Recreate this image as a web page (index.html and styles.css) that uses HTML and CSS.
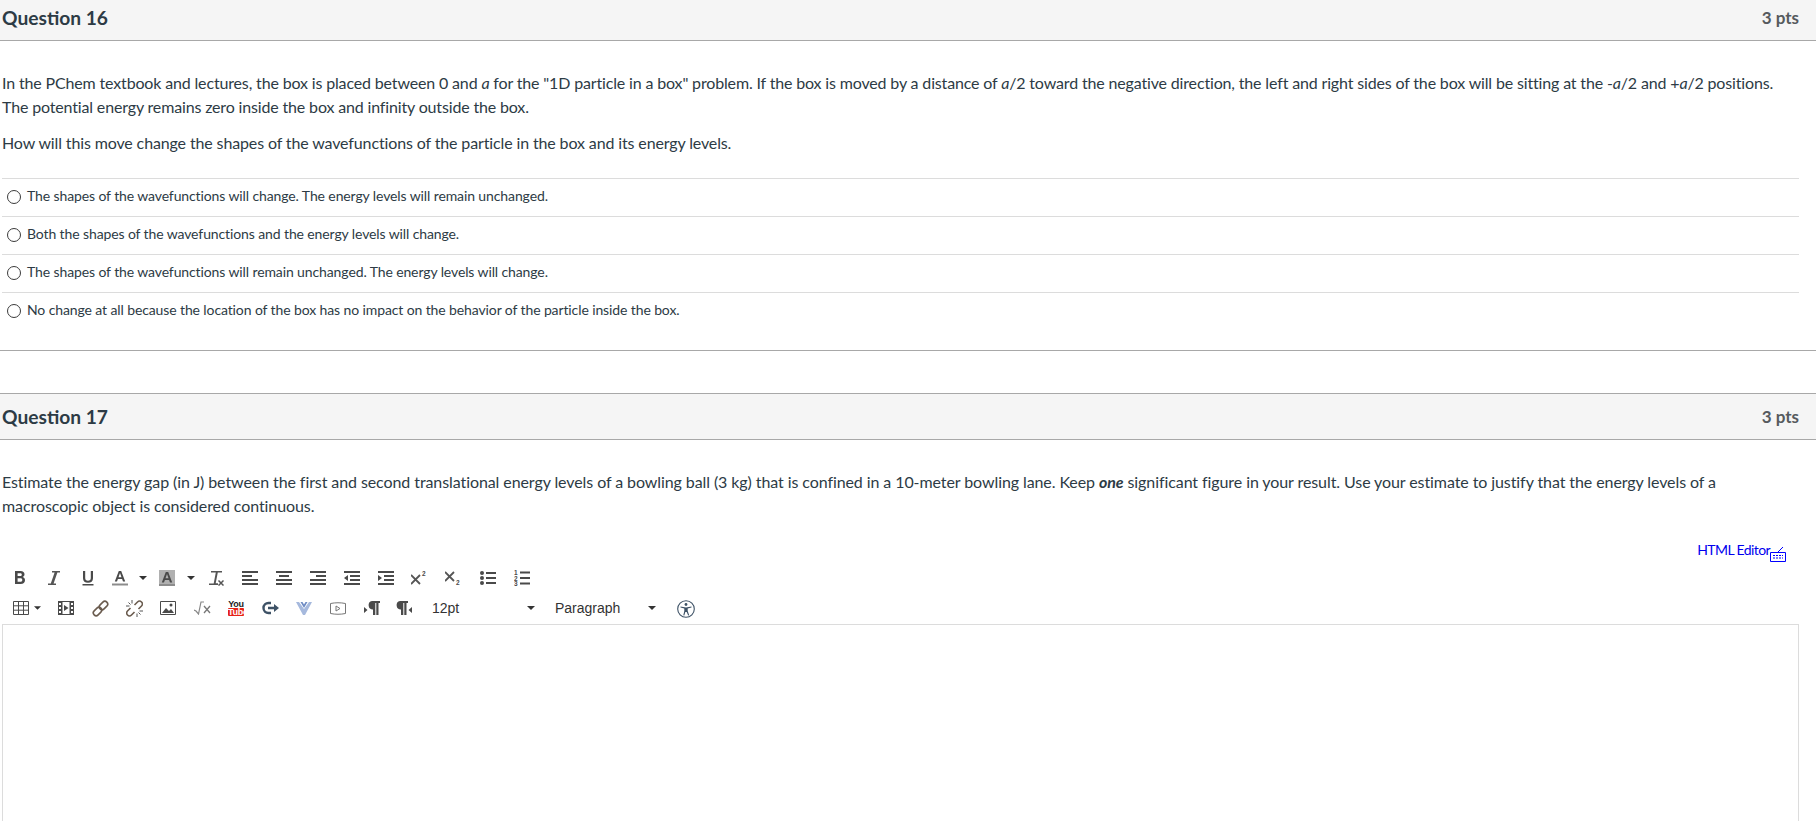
FILE: index.html
```html
<!DOCTYPE html>
<html lang="en">
<head>
<meta charset="utf-8">
<title>Quiz</title>
<link rel="stylesheet" href="styles.css">
</head>
<body>
<svg class="defs" width="0" height="0" aria-hidden="true"><defs>
<g id="caret"><path d="M0 0h8L4 4z" fill="#333"/></g>
</defs></svg>
<main class="page">
<section class="question q16">
  <header class="q-head"><h2 class="q-title">Question 16</h2><span class="q-pts">3 pts</span></header>
  <div class="q-body">
    <p class="q-text q-lead">In the PChem textbook and lectures, the box is placed between 0 and <em>a</em> for the "1D particle in a box" problem. If the box is moved by a distance of <em>a</em>/2 toward the negative direction, the left and right sides of the box will be sitting at the -<em>a</em>/2 and +<em>a</em>/2 positions. The potential energy remains zero inside the box and infinity outside the box.</p>
    <p class="q-text q-gap">How will this move change the shapes of the wavefunctions of the particle in the box and its energy levels.</p>
    <ul class="answers">
      <li class="answer"><span class="radio"></span>The shapes of the wavefunctions will change. The energy levels will remain unchanged.</li>
      <li class="answer"><span class="radio"></span>Both the shapes of the wavefunctions and the energy levels will change.</li>
      <li class="answer"><span class="radio"></span>The shapes of the wavefunctions will remain unchanged. The energy levels will change.</li>
      <li class="answer"><span class="radio"></span>No change at all because the location of the box has no impact on the behavior of the particle inside the box.</li>
    </ul>
  </div>
</section>
<section class="question q17">
  <header class="q-head"><h2 class="q-title">Question 17</h2><span class="q-pts">3 pts</span></header>
  <div class="q-body">
    <p class="q-text q-wide">Estimate the energy gap (in J) between the first and second translational energy levels of a bowling ball (3 kg) that is confined in a 10-meter bowling lane. Keep <strong><em>one</em></strong> significant figure in your result. Use your estimate to justify that the energy levels of a macroscopic object is considered continuous.</p>
    <div class="editor-link-row"><a class="html-link">HTML Editor<svg class="kbd" width="18" height="16" viewBox="0 0 18 16"><path d="M1.500 6.500h15v9h-15z" fill="none" stroke="#00f"/><path d="M9 6l5-5" stroke="#00f" fill="none"/><path d="M4 9h2v1H4zM7 9h2v1H7zM10 9h2v1h-2zM13 9h1v1h-1zM4 11.500h2v1H4zM7 11.500h2v1H7zM10 11.500h2v1h-2zM13 11.500h1v1h-1z" fill="#00f"/></svg></a></div>
    <div class="toolbar">
      <div class="tb-row">
        <span class="btn w34"><svg width="16" height="16" viewBox="0 0 16 16"><path fill="#4a4a4a" d="M3 1h5.500c2.600 0 4 1.300 4 3.300 0 1.300-.7 2.300-1.800 2.800 1.500.4 2.300 1.600 2.300 3.100 0 2.300-1.600 3.800-4.300 3.800H3zm2.600 2.200v2.900h2.500c1 0 1.700-.5 1.700-1.500s-.7-1.400-1.700-1.400zm0 5v3.600h2.800c1.200 0 1.900-.6 1.900-1.800s-.7-1.800-1.900-1.800z"/></svg></span>
        <span class="btn w34"><svg width="16" height="16" viewBox="0 0 16 16"><path fill="#555" d="M6 1h8v1.500h-2.600L7.600 13.500H10V15H2v-1.500h2.800L8.600 2.500H6z"/></svg></span>
        <span class="btn w34"><svg width="16" height="16" viewBox="0 0 16 16"><path fill="#4a4a4a" d="M3 1h2.200v7c0 1.800 1 2.700 2.800 2.700s2.800-.9 2.800-2.700V1H13v7.200c0 3-2 4.600-5 4.600s-5-1.600-5-4.600zM2.500 14h11v1.500h-11z"/></svg></span>
        <span class="btn w30"><svg width="16" height="16" viewBox="0 0 16 16"><path fill="#4a4a4a" d="M6.800 1h2.400l4 10.500h-2.200l-.9-2.500H5.900L5 11.500H2.800zM6.500 7.200h3L8 3z"/><path fill="#8c8c8c" d="M0 13.500h16V15.500H0z"/></svg></span>
        <span class="caret-btn w16"><svg width="8" height="4"><use href="#caret"/></svg></span>
        <span class="btn w32"><svg width="16" height="17" viewBox="0 0 16 17"><path fill="#b0b0b0" d="M0 0h16v14H0z"/><path fill="#4a4a4a" d="M6.800 2h2.400l4 10.500h-2.200l-.9-2.500H5.900L5 12.500H2.800zM6.500 8.200h3L8 4z"/><path fill="#8c8c8c" d="M0 14h16v2H0z"/></svg></span>
        <span class="caret-btn w16"><svg width="8" height="4"><use href="#caret"/></svg></span>
        <span class="btn w34"><svg width="16" height="16" viewBox="0 0 16 16"><path fill="#555" d="M3 1h11v1.500H9.800L7.700 13.300H10V15H1v-1.500h4.700L7.800 2.500H3z"/><path stroke="#555" stroke-width="1.500" d="M10.500 10.500l5 5m0-5l-5 5"/></svg></span>
        <span class="btn w34"><svg width="16" height="16" viewBox="0 0 16 16"><path fill="#4a4a4a" d="M0 1h16v2H0zM0 5h10v2H0zM0 9h16v2H0zM0 13h16v2H0z"/></svg></span>
        <span class="btn w34"><svg width="16" height="16" viewBox="0 0 16 16"><path fill="#4a4a4a" d="M0 1h16v2H0zM3 5h10v2H3zM0 9h16v2H0zM0 13h16v2H0z"/></svg></span>
        <span class="btn w34"><svg width="16" height="16" viewBox="0 0 16 16"><path fill="#4a4a4a" d="M0 1h16v2H0zM6 5h10v2H6zM0 9h16v2H0zM0 13h16v2H0z"/></svg></span>
        <span class="btn w34"><svg width="16" height="16" viewBox="0 0 16 16"><path fill="#4a4a4a" d="M0 1h16v2H0zM6 5h10v2H6zM6 9h10v2H6zM0 13h16v2H0zM4 5v6L0 8z"/></svg></span>
        <span class="btn w34"><svg width="16" height="16" viewBox="0 0 16 16"><path fill="#4a4a4a" d="M0 1h16v2H0zM6 5h10v2H6zM6 9h10v2H6zM0 13h16v2H0zM0 5v6l4-3z"/></svg></span>
        <span class="btn w32"><svg width="16" height="16" viewBox="0 0 16 16"><path stroke="#555" stroke-width="1.800" d="M0 5l9 9m0-9l-9 9"/><text x="11" y="6" class="mini">2</text></svg></span>
        <span class="btn w35"><svg width="16" height="16" viewBox="0 0 16 16"><path stroke="#555" stroke-width="1.800" d="M0 2l9 9m0-9l-9 9"/><text x="11" y="15" class="mini">2</text></svg></span>
        <span class="btn w35"><svg width="16" height="16" viewBox="0 0 16 16"><path fill="#4a4a4a" d="M6 2h10v2H6zM6 7h10v2H6zM6 12h10v2H6z"/><circle cx="2" cy="3" r="2" fill="#4a4a4a"/><circle cx="2" cy="8" r="2" fill="#4a4a4a"/><circle cx="2" cy="13" r="2" fill="#4a4a4a"/></svg></span>
        <span class="btn w34"><svg width="16" height="16" viewBox="0 0 16 16"><path fill="#4a4a4a" d="M6 1.500h10v2H6zM6 7h10v2H6zM6 12.500h10v2H6z"/><text x="0" y="5" class="mini">1</text><text x="0" y="10.500" class="mini">2</text><text x="0" y="16" class="mini">3</text></svg></span>
      </div>
      <div class="tb-row">
        <span class="table-btn"><svg width="16" height="14" viewBox="0 0 16 14"><path fill="none" stroke="#4a4a4a" d="M.5.500h15v13H.5zM5.500.500v13M10.500.500v13M.5 4.800h15M.5 9.200h15"/></svg><svg width="7" height="4" viewBox="0 0 8 4"><use href="#caret"/></svg></span>
        <span class="btn w34"><svg width="16" height="14" viewBox="0 0 16 14"><path fill="#4a4a4a" d="M0 0h16v14H0z"/><path fill="#fff" d="M1 2h2v2H1zM1 6h2v2H1zM1 10h2v2H1zM13 2h2v2h-2zM13 6h2v2h-2zM13 10h2v2h-2zM4.500 1h7v12h-7z"/><path fill="#4a4a4a" d="M6 4v6l4.500-3z"/></svg></span>
        <span class="btn w34"><svg width="17" height="17" viewBox="0 0 17 17"><g fill="none" stroke="#6b5c4f" stroke-width="1.600"><rect x="6.700" y="2.700" width="9.500" height="5.600" rx="2.800" transform="rotate(-45 11.500 5.500)"/><rect x=".8" y="8.700" width="9.500" height="5.600" rx="2.800" transform="rotate(-45 5.500 11.500)"/></g></svg></span>
        <span class="btn w34"><svg width="17" height="17" viewBox="0 0 17 17"><g fill="none" stroke="#6b5c4f" stroke-width="1.600"><path d="M8.500 5l3-3a2.800 2.800 0 0 1 4 4l-3 3M8.500 12l-3 3a2.800 2.800 0 0 1-4-4l3-3"/></g><path fill="none" stroke="#555" d="M6 0v3.500M0 6h3.500M2.500 2.500l2 2M11 17v-3.500M17 11h-3.500M14.500 14.500l-2-2"/></svg></span>
        <span class="btn w34"><svg width="16" height="14" viewBox="0 0 16 14"><path fill="none" stroke="#4a4a4a" d="M.5.500h15v13H.5z"/><path fill="#4a4a4a" d="M2 12l4-5 3 3 2-2 3 4z"/><circle cx="11" cy="4" r="1.500" fill="#4a4a4a"/></svg></span>
        <span class="btn w34"><svg width="17" height="14" viewBox="0 0 17 14"><path fill="none" stroke="#888" stroke-width="1.200" d="M0 9l2 1 2.500 3L7 1h3"/><path stroke="#777" stroke-width="1.300" d="M10 5l6 7m0-7l-6 7"/></svg></span>
        <span class="btn w34 yt"><span class="yt-you">You</span><span class="yt-tube">Tube</span></span>
        <span class="btn w34"><svg width="17" height="14" viewBox="0 0 17 14"><path fill="none" stroke="#3e5266" stroke-width="2.400" d="M9 2H6.500a5 5 0 0 0 0 10H9"/><path fill="#3e5266" d="M6 5.800h6V3l5 4-5 4V8.200H6z"/></svg></span>
        <span class="btn w34"><svg width="16" height="13" viewBox="0 0 16 13"><path fill="#a6b9dd" d="M0 0h3l5 7 5-7h3L9 13H7z"/><path fill="#6f8cc4" d="M4.500 0h2L8 2.500 9.500 0h2L8 6z"/></svg></span>
        <span class="btn w34"><svg width="16" height="13" viewBox="0 0 16 13"><path fill="none" stroke="#777" d="M.5 1.500c5-1 10-1 15 0v10c-5 1-10 1-15 0z"/><path fill="none" stroke="#777" d="M6 4v5l4-2.500z"/></svg></span>
        <span class="btn w34"><svg width="16" height="16" viewBox="0 0 16 16"><path fill="#4a4a4a" d="M8 1h8v2h-1.500v12h-2.200V3h-1v12H9V9.500A4.300 4.300 0 0 1 8 1zM0 7v6l3.500-3z"/></svg></span>
        <span class="btn w30"><svg width="16" height="16" viewBox="0 0 16 16"><path fill="#4a4a4a" d="M4 1h8v2h-1.500v12H8.300V3h-1v12H5V9.500A4.300 4.300 0 0 1 4 1zM16 7v6l-3.500-3z"/></svg></span>
        <span class="select-btn w-size">12pt<svg width="8" height="4"><use href="#caret"/></svg></span>
        <span class="select-btn w-para">Paragraph<svg width="8" height="4"><use href="#caret"/></svg></span>
        <span class="a11y"><svg width="18" height="18" viewBox="0 0 18 18"><circle cx="9" cy="9" r="8.300" fill="none" stroke="#3e5266" stroke-width="1.100"/><circle cx="9" cy="4.500" r="1.400" fill="#3e5266"/><path fill="#3e5266" d="M3.500 6.500L9 7.500l5.500-1v1.100l-3.800 1V11l1.500 4.300-1 .3L9.700 12h-1.400l-1 3.600-1-.3L7.300 11V8.600l-3.800-1z"/></svg></span>
      </div>
    </div>
    <div class="editor"></div>
  </div>
</section>
</main>
</body>
</html>
```

FILE: styles.css
```css
* { box-sizing: border-box; }
html, body { margin: 0; padding: 0; height: 100%; overflow: hidden; background: #fff; }
body { font-family: Lato, "Liberation Sans", sans-serif; color: #2d3b45; font-size: 16px; }
.defs { position: absolute; }
.page { margin-top: -6px; }
.question { border-bottom: 1px solid #a8a8a8; }
.q17 { margin-top: 42px; border-top: 1px solid #a8a8a8; border-bottom: 0; }
.q-head { height: 47px; background: #f5f5f5; border-bottom: 1px solid #a8a8a8; display: flex; align-items: center; justify-content: space-between; padding: 1px 17px 0 2px; }
.q17 .q-head { height: 46px; padding-top: 0; }
.q-title { margin: 0; font-size: 19.2px; font-weight: 700; line-height: 24px; color: #2d3b45; }
.q-pts { font-size: 17px; font-weight: 700; color: #555a5e; }
.q-body { padding: 30px 17px 0 2px; }
.q-text { margin: 0; line-height: 24px; letter-spacing: -0.13px; }
.q-lead { letter-spacing: -0.155px; }
.q-wide { letter-spacing: -0.087px; }
.q-gap { margin-top: 12px; }
.answers { list-style: none; margin: 23px 0 20px; padding: 0; }
.answer { height: 38px; border-top: 1px solid #dcdcdc; display: flex; align-items: center; font-size: 14px; line-height: 20px; padding: 0 0 4px 5px; letter-spacing: -0.11px; }
.radio { width: 14px; height: 14px; border: 1px solid #3b3b3b; border-radius: 50%; margin-right: 6px; margin-top: 2px; flex: none; }
.editor-link-row { display: flex; justify-content: flex-end; padding-right: 12px; margin-top: 22px; height: 23px; }
.html-link { color: #0000ee; font-size: 14px; line-height: 20px; display: flex; align-items: flex-start; letter-spacing: -0.6px; }
.kbd { margin-top: 6px; margin-left: -1px; }
.toolbar { margin-left: 1px; }
.tb-row { height: 30px; display: flex; align-items: center; }
.btn, .caret-btn { display: flex; align-items: center; justify-content: center; flex: none; height: 30px; }
.w16 { width: 16px; } .w30 { width: 30px; } .w32 { width: 32px; } .w34 { width: 34px; } .w35 { width: 35px; }
.table-btn { display: flex; align-items: center; gap: 5px; padding-left: 10px; width: 46px; flex: none; }
.mini { font: 700 6.500px "Liberation Sans", sans-serif; fill: #4a4a4a; }
.yt { flex-direction: column; font-family: "Liberation Sans", sans-serif; font-weight: 700; line-height: 8px; font-size: 9px; letter-spacing: -0.3px; }
.yt-you { color: #222; }
.yt-tube { background: #e62117; color: #fff; width: 16px; text-align: center; border-radius: 1px; }
.select-btn { font-family: "Liberation Sans", sans-serif; font-size: 14px; color: #333; display: flex; align-items: center; justify-content: space-between; flex: none; height: 30px; }
.w-size { width: 116px; padding-left: 13px; }
.w-para { width: 121px; padding-left: 20px; }
.a11y { margin-left: 21px; margin-top: 2px; display: flex; }
.editor { height: 240px; margin-top: 1px; border: 1px solid #dcdcdc; }
```
